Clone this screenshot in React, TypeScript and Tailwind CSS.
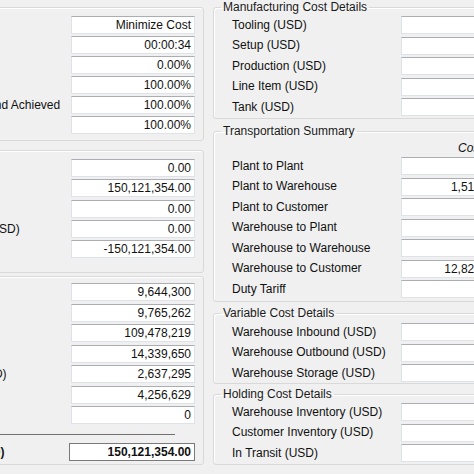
const solution = [
  { l: "Objective", v: "Minimize Cost" },
  { l: "Solve Time", v: "00:00:34" },
  { l: "Optimality Gap", v: "0.00%" },
  { l: "Fill Rate (%)", v: "100.00%" },
  { l: "Weighted Demand Achieved", v: "100.00%" },
  { l: "Service Level", v: "100.00%" },
];

const financial = [
  { l: "Revenue (USD)", v: "0.00" },
  { l: "Cost (USD)", v: "150,121,354.00" },
  { l: "Rebates (USD)", v: "0.00" },
  { l: "Penalty Costs (USD)", v: "0.00" },
  { l: "Profit (USD)", v: "-150,121,354.00" },
];

const costs = [
  { l: "Fixed (USD)", v: "9,644,300" },
  { l: "Setup (USD)", v: "9,765,262" },
  { l: "Product (USD)", v: "109,478,219" },
  { l: "Transport (USD)", v: "14,339,650" },
  { l: "Warehouse (USD)", v: "2,637,295" },
  { l: "Holding (USD)", v: "4,256,629" },
  { l: "Other (USD)", v: "0" },
];

const manufacturing = ["Tooling (USD)", "Setup (USD)", "Production (USD)", "Line Item (USD)", "Tank (USD)"];

const transport = [
  { l: "Plant to Plant", v: "" },
  { l: "Plant to Warehouse", v: "1,517,042.00" },
  { l: "Plant to Customer", v: "" },
  { l: "Warehouse to Plant", v: "" },
  { l: "Warehouse to Warehouse", v: "" },
  { l: "Warehouse to Customer", v: "12,822,608.00" },
  { l: "Duty Tariff", v: "" },
];

const variable = ["Warehouse Inbound (USD)", "Warehouse Outbound (USD)", "Warehouse Storage (USD)"];
const holding = ["Warehouse Inventory (USD)", "Customer Inventory (USD)", "In Transit (USD)"];

const box =
  "h-[18px] shrink-0 bg-white border border-[#dfe3e8] border-t-[#abadb3] pr-[3px] text-right leading-[16px] whitespace-nowrap overflow-hidden";

const group = "border border-[#d9d9d9] rounded-[3px] shadow-[inset_1px_1px_0_0_#ffffff]";

function LeftRow({ l, v }: { l: string; v: string }) {
  return (
    <div className="flex items-center h-[18px] pl-[8px] pr-[8px]">
      <span className="flex-1 min-w-0 whitespace-nowrap">{l}</span>
      <div className={`${box} w-[124px]`}>{v}</div>
    </div>
  );
}

function RightRow({ l, v = "" }: { l: string; v?: string }) {
  return (
    <div className="flex items-center h-[18px] pl-[18px] pr-[6px]">
      <span className="flex-1 min-w-0 whitespace-nowrap pb-[1px]">{l}</span>
      <div className={`${box} w-[124px]`}>{v}</div>
    </div>
  );
}

function Legend({ children }: { children: string }) {
  return <legend className="ml-[7px] px-[2px] leading-[15px] text-[#1a1a1a]">{children}</legend>;
}

export default function App() {
  return (
    <div className="w-[474px] h-[474px] overflow-hidden bg-[#f0f0f0] text-[12px] text-[#111] font-['Liberation_Sans',Arial,sans-serif]">
      <div className="-ml-[100px] flex items-start gap-[9px]">
        {/* Summary column (left edge is cut off in the capture) */}
        <div className="w-[304px] shrink-0 flex flex-col pt-[7px]">
          <div className={`${group} pt-[8px] pb-[6px] flex flex-col gap-[2px]`}>
            {solution.map((r) => (
              <LeftRow key={r.l} {...r} />
            ))}
          </div>

          <div className={`${group} mt-[9px] pt-[8px] pb-[14px] flex flex-col gap-[2.25px]`}>
            {financial.map((r) => (
              <LeftRow key={r.l} {...r} />
            ))}
          </div>

          <div className={`${group} mt-[3px] pt-[6px] pb-[3px] flex flex-col`}>
            <div className="flex flex-col gap-[2.5px]">
              {costs.map((r) => (
                <LeftRow key={r.l} {...r} />
              ))}
            </div>
            <div className="ml-[9px] mt-[10px] w-[265px] h-px bg-[#707070]" />
            <div className="flex items-center h-[18px] mt-[8px] pl-[9px] pr-[8px] font-bold">
              <span className="flex-1 min-w-0 whitespace-nowrap">Total Cost (USD)</span>
              <div className="h-[18px] w-[126px] shrink-0 bg-white border border-[#7a7a7a] pr-[3px] text-right leading-[16px]">
                150,121,354.00
              </div>
            </div>
          </div>
        </div>

        {/* Details column (right edge is cut off) */}
        <div className="w-[319px] shrink-0 flex flex-col">
          <fieldset className={`${group} pt-[1px] pb-[2px]`}>
            <Legend>Manufacturing Cost Details</Legend>
            <div className="flex flex-col gap-[2.5px]">
              {manufacturing.map((l) => (
                <RightRow key={l} l={l} />
              ))}
            </div>
          </fieldset>

          <fieldset className={`${group} mt-[4.5px] pb-[3px]`}>
            <Legend>Transportation Summary</Legend>
            <div className="h-[18.5px] pl-[244px] italic leading-[18px] whitespace-nowrap">Cost (USD)</div>
            <div className="flex flex-col gap-[2.5px]">
              {transport.map((r) => (
                <RightRow key={r.l} {...r} />
              ))}
            </div>
          </fieldset>

          <fieldset className={`${group} mt-[3.5px] pt-[2.5px] pb-[1px]`}>
            <Legend>Variable Cost Details</Legend>
            <div className="flex flex-col gap-[2.5px]">
              {variable.map((l) => (
                <RightRow key={l} l={l} />
              ))}
            </div>
          </fieldset>

          <fieldset className={`${group} mt-[3px] pt-[1px] pb-[2px]`}>
            <Legend>Holding Cost Details</Legend>
            <div className="flex flex-col gap-[2.5px]">
              {holding.map((l) => (
                <RightRow key={l} l={l} />
              ))}
            </div>
          </fieldset>
        </div>
      </div>
    </div>
  );
}
